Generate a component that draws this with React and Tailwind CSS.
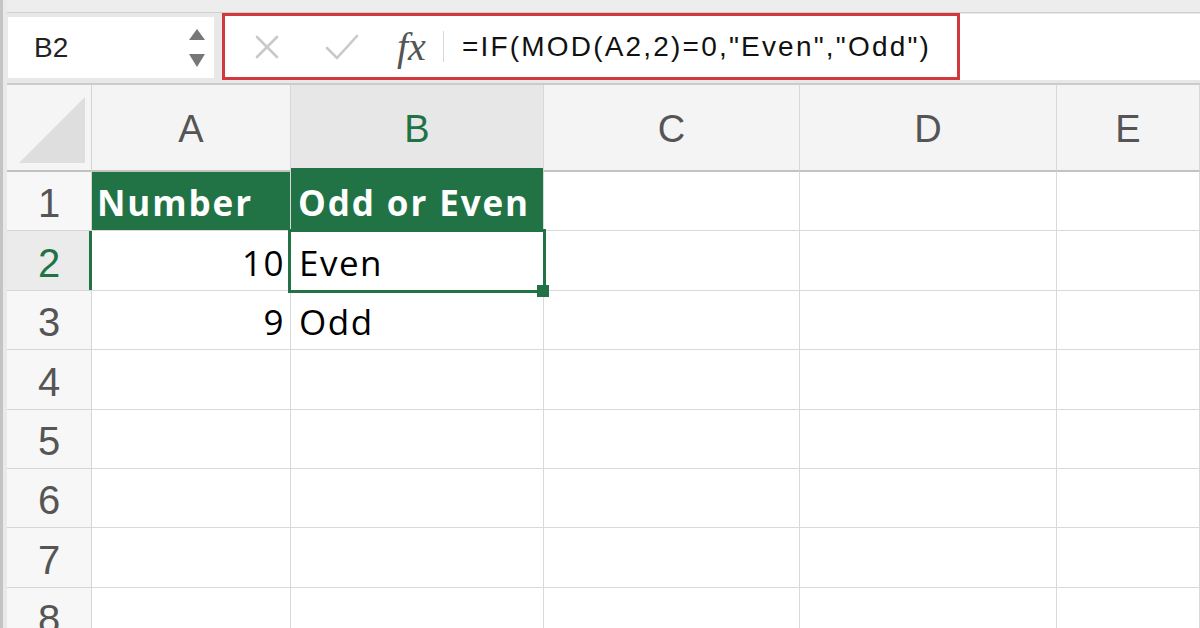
import React from 'react';

const cols = ['A', 'B', 'C', 'D', 'E'];
const rows = [1, 2, 3, 4, 5, 6, 7, 8];

const cellFont = { fontFamily: '"Open Sans", "DejaVu Sans", sans-serif' };

const SpinArrows = () => (
    <svg width="18" height="40" viewBox="0 0 18 40" className="mr-[8px]">
        <path d="M9 1 L17 12 L1 12 Z" fill="#777" />
        <path d="M1 26 L17 26 L9 39 Z" fill="#777" />
    </svg>
);

const Cell = ({ r, c }) => {
    const base = 'relative border-r border-b border-[#d9d9d9] h-[59.4px]';
    if (r === 1 && (c === 'A' || c === 'B')) {
        return (
            <div className={`${base} bg-[#217346] border-[#2a7a4e] flex items-end text-white font-bold text-[35px] leading-none tracking-[1.9px] pb-[10px] ${c === 'A' ? 'pl-[5px]' : 'pl-[7px]'}`} style={cellFont}>
                {c === 'A' ? 'Number' : 'Odd or Even'}
            </div>
        );
    }
    if (c === 'A' && (r === 2 || r === 3)) {
        return (
            <div className={`${base} flex items-end justify-end text-black text-[35px] leading-none tracking-[1.5px] pb-[10px] pr-[5px]`} style={cellFont}>
                {r === 2 ? '10' : '9'}
            </div>
        );
    }
    if (c === 'B' && (r === 2 || r === 3)) {
        return (
            <div className={`${base} flex items-end text-black text-[35px] leading-none tracking-[1.5px] pb-[10px] pl-[8px]`} style={cellFont}>
                {r === 2 ? 'Even' : 'Odd'}
                {r === 2 && (
                    <>
                        <div className="absolute z-10 left-[-3px] right-[-3px] top-[-2px] bottom-[-3px] border-[3px] border-[#217346]" />
                        <div className="absolute z-10 right-[-6px] bottom-[-7px] w-[12px] h-[12px] bg-[#217346]" />
                    </>
                )}
            </div>
        );
    }
    return <div className={base} />;
};

const App = () => {
    return (
        <div className="w-[1200px] h-[628px] overflow-hidden bg-white flex">
            <div className="w-[3px] shrink-0 bg-[#c4c4c4]" />
            <div className="w-[4px] shrink-0 bg-[#e9e9e9]" />
            <div className="flex-1 flex flex-col overflow-hidden">
                <div className="h-[13px] shrink-0 bg-[#ededed] border-b border-[#cfcfcf]" />
                <div className="h-[70px] shrink-0 bg-[#e8e8e8] flex items-start">
                    <div className="ml-[1px] mt-[4px] w-[206px] h-[61px] bg-white flex items-center justify-between">
                        <span className="pl-[26px] text-[28px] text-[#222]" style={{ fontFamily: '"Liberation Sans", Arial, sans-serif' }}>B2</span>
                        <SpinArrows />
                    </div>
                    <div className="ml-[8px] w-[738px] h-[67px] border-[3px] border-[#d2393f] bg-white flex items-center">
                        <svg width="24" height="24" viewBox="0 0 24 24" className="ml-[30px]">
                            <path d="M2 2 L22 22 M22 2 L2 22" stroke="#c9c9c9" strokeWidth="2.6" strokeLinecap="round" />
                        </svg>
                        <svg width="34" height="28" viewBox="0 0 34 28" className="ml-[46px]">
                            <path d="M2 15 L12 25 L32 3" stroke="#c9c9c9" strokeWidth="2.6" fill="none" strokeLinecap="round" strokeLinejoin="round" />
                        </svg>
                        <span className="ml-[38px] text-[40px] italic text-[#555] leading-none" style={{ fontFamily: '"Liberation Serif", "Times New Roman", serif' }}>fx</span>
                        <div className="ml-[17px] w-px h-[31px] bg-[#d8d8d8]" />
                        <span className="ml-[18px] text-[28px] tracking-[2.2px] text-[#111] whitespace-nowrap" style={{ fontFamily: '"Liberation Sans", Arial, sans-serif' }}>
                            =IF(MOD(A2,2)=0,"Even","Odd")
                        </span>
                    </div>
                    <div className="flex-1 mt-[1px] h-[66px] bg-white" />
                </div>
                <div className="h-[2px] shrink-0 bg-[#cbcbcb]" />
                <div className="shrink-0 grid grid-cols-[85px_199px_253px_256px_257px_1fr]">
                    <div className="h-[87px] bg-[#f5f5f5] border-r border-[#d4d4d4] border-b-2 border-b-[#c2c2c2] flex items-end justify-end pr-[6px] pb-[7px]">
                        <svg width="66" height="66" viewBox="0 0 66 66">
                            <path d="M66 0 L66 66 L0 66 Z" fill="#dedede" />
                        </svg>
                    </div>
                    {cols.map((c) => (
                        <div
                            key={c}
                            className={`relative h-[87px] border-r border-[#d8d8d8] border-b-2 border-b-[#c2c2c2] flex items-center justify-center pt-[3px] text-[38px] ${c === 'B' ? 'bg-[#e7e7e7] text-[#217346]' : 'bg-[#f4f4f4] text-[#555]'}`}
                            style={{ fontFamily: '"Liberation Sans", Arial, sans-serif' }}
                        >
                            {c}
                            {c === 'B' && <div className="absolute left-0 right-0 bottom-[-2px] h-[4px] bg-[#217346]" />}
                        </div>
                    ))}
                    {rows.map((r) => (
                        <React.Fragment key={r}>
                            <div
                                className={`relative h-[59.4px] border-r border-b border-[#d6d6d6] flex items-end justify-center pb-[7px] text-[40px] leading-none ${r === 2 ? 'bg-[#ebebeb] text-[#217346]' : 'bg-[#f7f7f7] text-[#555]'}`}
                                style={{ fontFamily: '"Liberation Sans", Arial, sans-serif' }}
                            >
                                {r}
                                {r === 2 && <div className="absolute right-[-1px] top-0 bottom-0 w-[3px] bg-[#217346]" />}
                            </div>
                            {cols.map((c) => (
                                <Cell key={c} r={r} c={c} />
                            ))}
                        </React.Fragment>
                    ))}
                </div>
            </div>
        </div>
    );
};

export default App;
